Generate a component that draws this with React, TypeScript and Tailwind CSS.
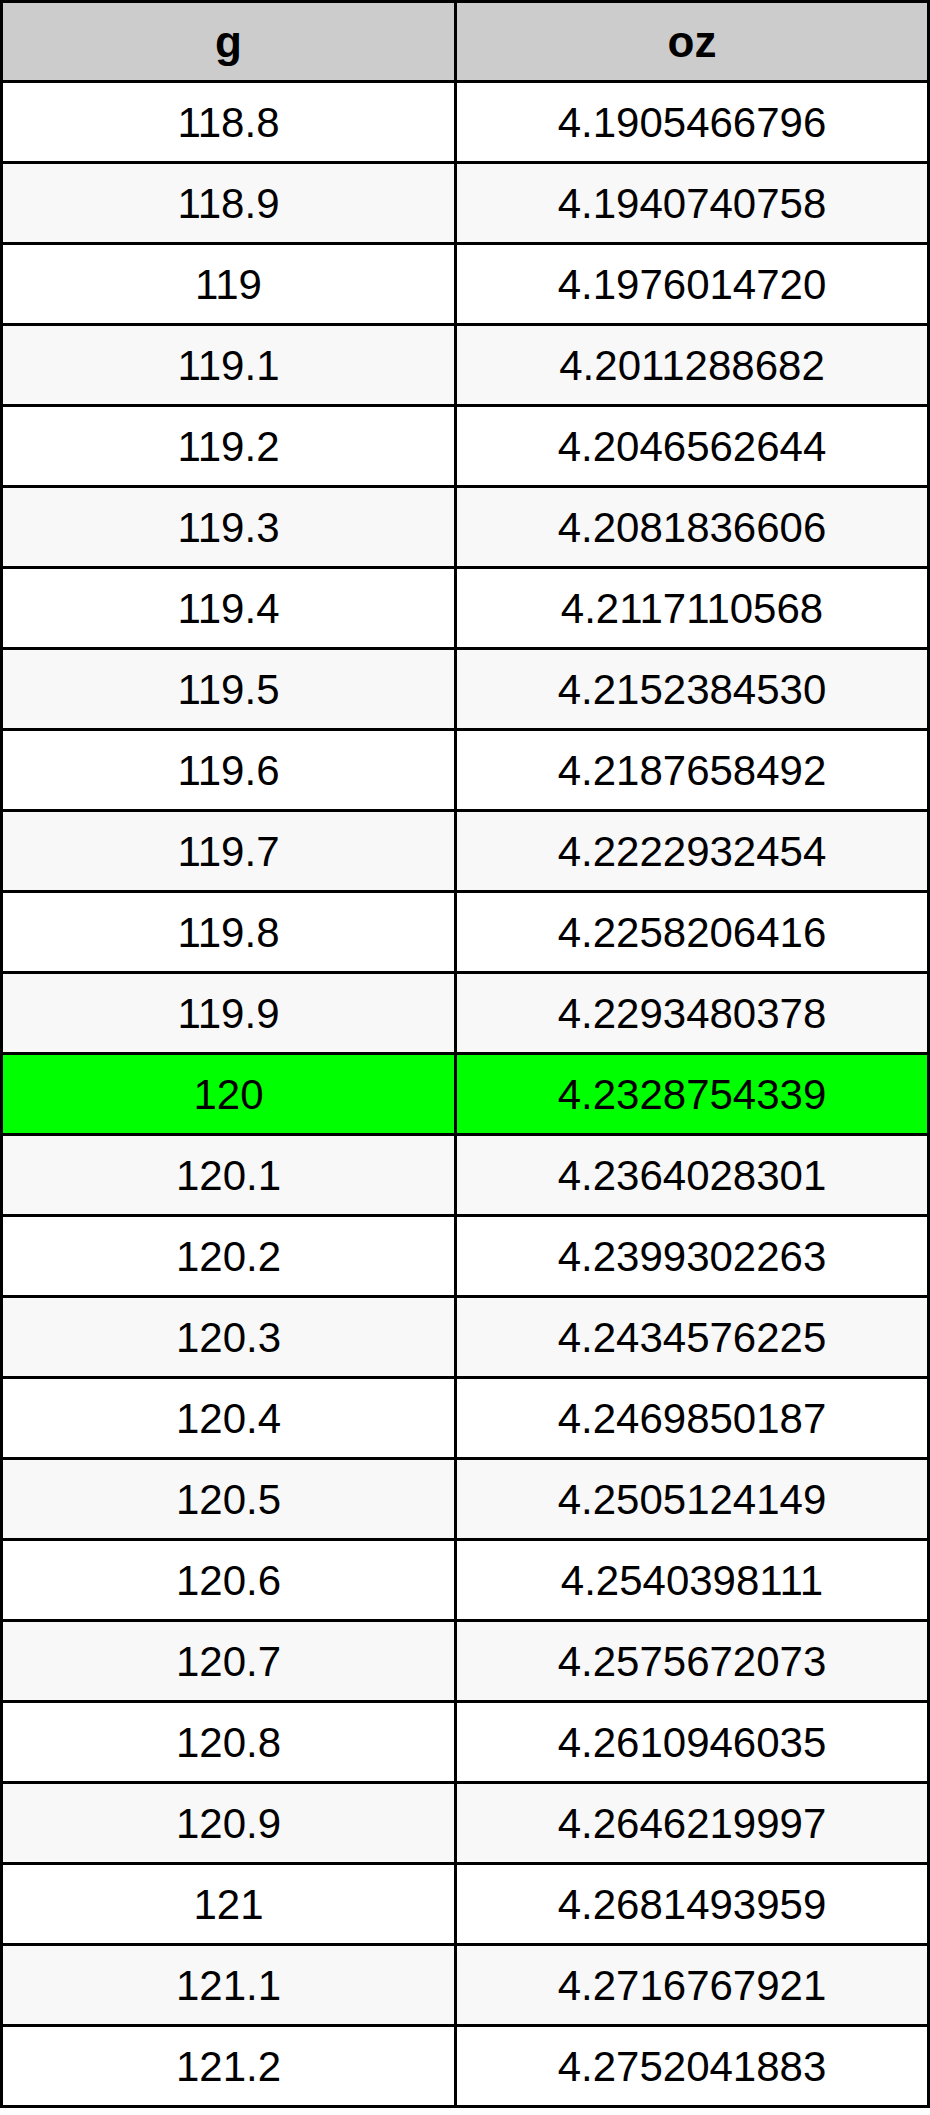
const rows: Array<[string, string]> = [
  ['118.8', '4.1905466796'],
  ['118.9', '4.1940740758'],
  ['119', '4.1976014720'],
  ['119.1', '4.2011288682'],
  ['119.2', '4.2046562644'],
  ['119.3', '4.2081836606'],
  ['119.4', '4.2117110568'],
  ['119.5', '4.2152384530'],
  ['119.6', '4.2187658492'],
  ['119.7', '4.2222932454'],
  ['119.8', '4.2258206416'],
  ['119.9', '4.2293480378'],
  ['120', '4.2328754339'],
  ['120.1', '4.2364028301'],
  ['120.2', '4.2399302263'],
  ['120.3', '4.2434576225'],
  ['120.4', '4.2469850187'],
  ['120.5', '4.2505124149'],
  ['120.6', '4.2540398111'],
  ['120.7', '4.2575672073'],
  ['120.8', '4.2610946035'],
  ['120.9', '4.2646219997'],
  ['121', '4.2681493959'],
  ['121.1', '4.2716767921'],
  ['121.2', '4.2752041883'],
];

export default function App() {
  return (
    <div className="min-h-screen w-[930px] bg-white text-black" style={{ fontFamily: '"Liberation Sans", Arial, sans-serif' }}>
      <div className="border-[3px] border-black">
        <div className="flex h-[80px] border-b-[3px] border-black bg-[#cccccc] text-[44px] font-bold">
          <div className="flex w-[454px] items-center justify-center border-r-[3px] border-black">g</div>
          <div className="flex flex-1 items-center justify-center">oz</div>
        </div>
        {rows.map(([g, oz], index) => {
          const bg = g === '120' ? 'bg-[#00ff00]' : index % 2 === 1 ? 'bg-[#f8f8f8]' : 'bg-white';
          const last = index === rows.length - 1;
          return (
            <div
              key={g}
              className={`flex text-[42px] ${bg} ${last ? 'h-[78px]' : 'h-[81px] border-b-[3px] border-black'}`}
            >
              <div className="flex w-[454px] items-center justify-center border-r-[3px] border-black">{g}</div>
              <div className="flex flex-1 items-center justify-center">{oz}</div>
            </div>
          );
        })}
      </div>
    </div>
  );
}
